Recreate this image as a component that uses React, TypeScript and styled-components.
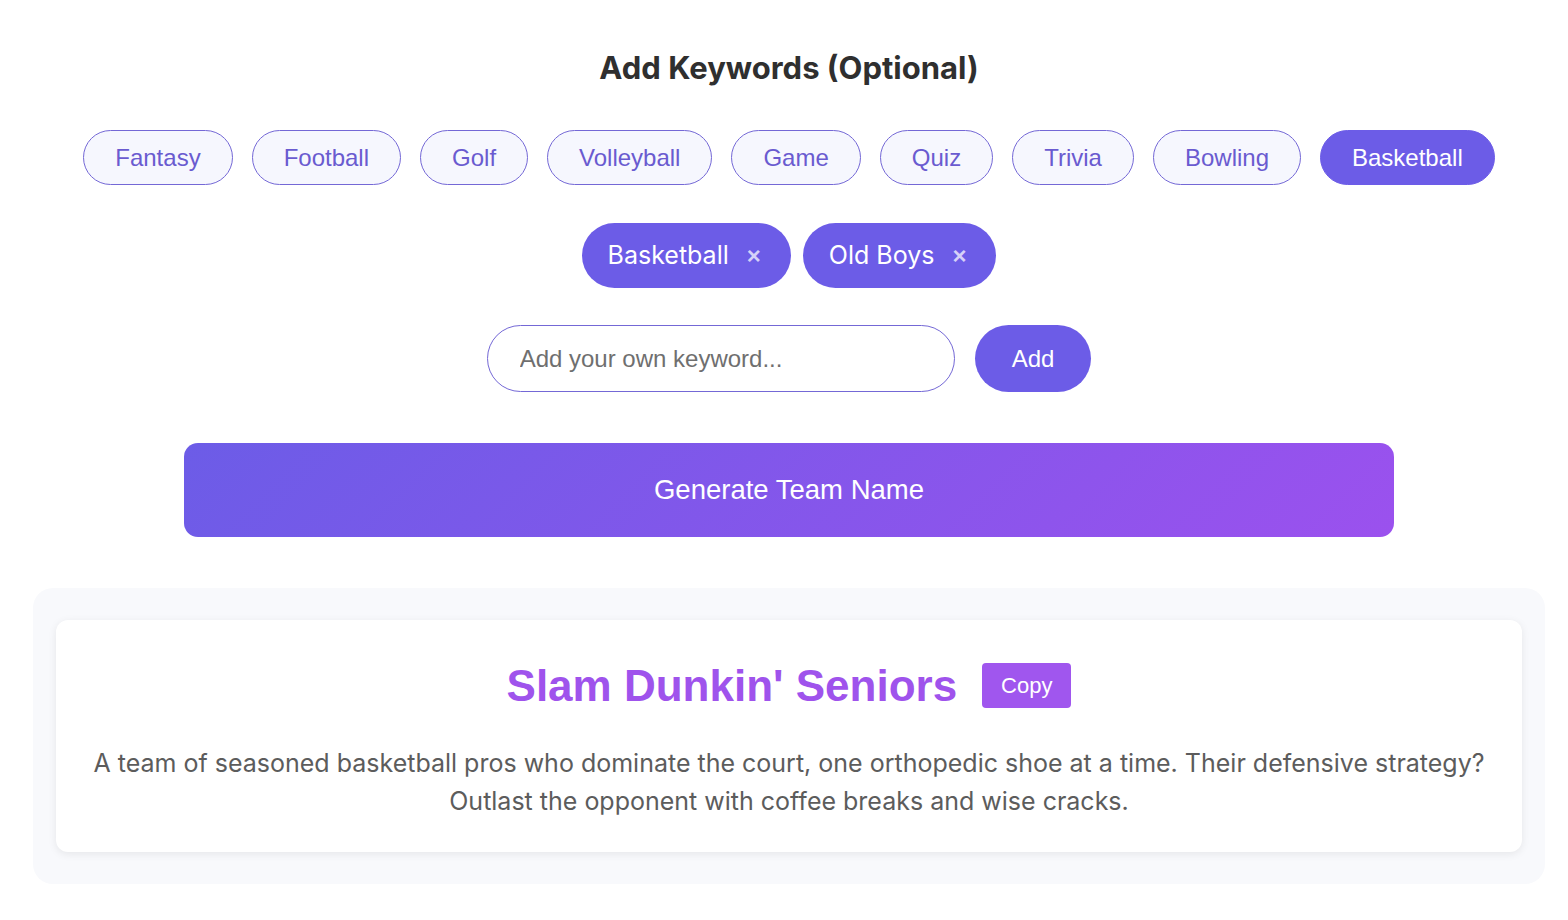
import React, { useState } from 'react';
import styled, { createGlobalStyle } from 'styled-components';

const GlobalStyle = createGlobalStyle`
  body {
    margin: 0;
    background: #ffffff;
    font-family: Inter, "Noto Sans", sans-serif;
  }
`;

const Page = styled.div`
  padding: 50px 23px 40px 33px;
  display: flex;
  flex-direction: column;
  align-items: center;
`;

const Title = styled.h2`
  margin: 0 0 44px;
  font-size: 31px;
  line-height: 36px;
  font-weight: 700;
  color: #2f2f2f;
`;

const TagRow = styled.div`
  display: flex;
  flex-wrap: wrap;
  justify-content: center;
  gap: 19px;
  margin-bottom: 38px;
`;

const Tag = styled.button<{ $active?: boolean }>`
  font-family: "Liberation Sans", Arial, sans-serif;
  font-size: 24px;
  line-height: 27px;
  padding: 13px 31px;
  border-radius: 999px;
  border: 1px solid ${(p) => (p.$active ? '#6c5ce7' : '#7468d6')};
  background: ${(p) => (p.$active ? '#6c5ce7' : '#f6f7fe')};
  color: ${(p) => (p.$active ? '#ffffff' : '#6a5bd0')};
  cursor: pointer;
`;

const ChipRow = styled.div`
  display: flex;
  gap: 12px;
  justify-content: center;
  margin-bottom: 37px;
`;

const Chip = styled.span`
  display: inline-flex;
  align-items: center;
  gap: 18px;
  padding: 18px 30px 18px 26px;
  border-radius: 999px;
  background: #6c5ce7;
  color: #ffffff;
  font-size: 25px;
  line-height: 29px;
`;

const ChipClose = styled.span`
  font-family: "Liberation Sans", Arial, sans-serif;
  font-weight: 700;
  font-size: 24px;
  color: rgba(255, 255, 255, 0.72);
  cursor: pointer;
`;

const InputRow = styled.div`
  display: flex;
  gap: 20px;
  justify-content: center;
  margin-bottom: 51px;
`;

const KeywordInput = styled.input`
  box-sizing: border-box;
  width: 468px;
  height: 67px;
  padding: 0 32px;
  border: 1px solid #7468d6;
  border-radius: 999px;
  font-family: "Liberation Sans", Arial, sans-serif;
  font-size: 24px;
  color: #333;
  outline: none;
  &::placeholder {
    color: #6f6f6f;
  }
`;

const AddButton = styled.button`
  height: 67px;
  padding: 0 37px;
  border: none;
  border-radius: 999px;
  background: #6c5ce7;
  color: #ffffff;
  font-family: "Liberation Sans", Arial, sans-serif;
  font-size: 24px;
  cursor: pointer;
`;

const GenerateButton = styled.button`
  width: 80%;
  height: 94px;
  border: none;
  border-radius: 14px;
  background: linear-gradient(135deg, #6c5ce7 0%, #9b51ee 100%);
  color: #ffffff;
  font-family: "Liberation Sans", Arial, sans-serif;
  font-size: 27.5px;
  cursor: pointer;
  margin-bottom: 51px;
`;

const Results = styled.div`
  align-self: stretch;
  background: #f8f9fc;
  border-radius: 20px;
  padding: 32px 23px;
`;

const Card = styled.div`
  background: #ffffff;
  border-radius: 12px;
  box-shadow: 0 2px 8px rgba(0, 0, 0, 0.08);
  padding: 39px 20px 32px;
  text-align: center;
`;

const NameRow = styled.div`
  display: flex;
  align-items: center;
  justify-content: center;
  gap: 25px;
  margin-bottom: 32px;
`;

const TeamName = styled.h3`
  margin: 0;
  font-family: "Liberation Sans", Arial, sans-serif;
  font-size: 44px;
  line-height: 53px;
  font-weight: 700;
  color: #9f53ec;
`;

const CopyButton = styled.button`
  height: 45px;
  padding: 0 19px;
  border: none;
  border-radius: 4px;
  background: #a056ee;
  color: #ffffff;
  font-family: "Liberation Sans", Arial, sans-serif;
  font-size: 22px;
  cursor: pointer;
`;

const Description = styled.p`
  margin: 0;
  font-size: 25px;
  line-height: 38px;
  color: #5c5c5c;
`;

const presets = ['Fantasy', 'Football', 'Golf', 'Volleyball', 'Game', 'Quiz', 'Trivia', 'Bowling', 'Basketball'];

const App: React.FC = () => {
  const [keywords, setKeywords] = useState<string[]>(['Basketball', 'Old Boys']);

  return (
    <>
      <GlobalStyle />
      <Page>
        <Title>Add Keywords (Optional)</Title>
        <TagRow>
          {presets.map((t) => (
            <Tag key={t} $active={keywords.includes(t)}>
              {t}
            </Tag>
          ))}
        </TagRow>
        <ChipRow>
          {keywords.map((k) => (
            <Chip key={k}>
              {k}
              <ChipClose onClick={() => setKeywords(keywords.filter((x) => x !== k))}>×</ChipClose>
            </Chip>
          ))}
        </ChipRow>
        <InputRow>
          <KeywordInput placeholder="Add your own keyword..." />
          <AddButton>Add</AddButton>
        </InputRow>
        <GenerateButton>Generate Team Name</GenerateButton>
        <Results>
          <Card>
            <NameRow>
              <TeamName>Slam Dunkin' Seniors</TeamName>
              <CopyButton>Copy</CopyButton>
            </NameRow>
            <Description>
              A team of seasoned basketball pros who dominate the court, one orthopedic shoe at a time. Their defensive strategy? Outlast the opponent with coffee breaks and wise cracks.
            </Description>
          </Card>
        </Results>
      </Page>
    </>
  );
};

export default App;
